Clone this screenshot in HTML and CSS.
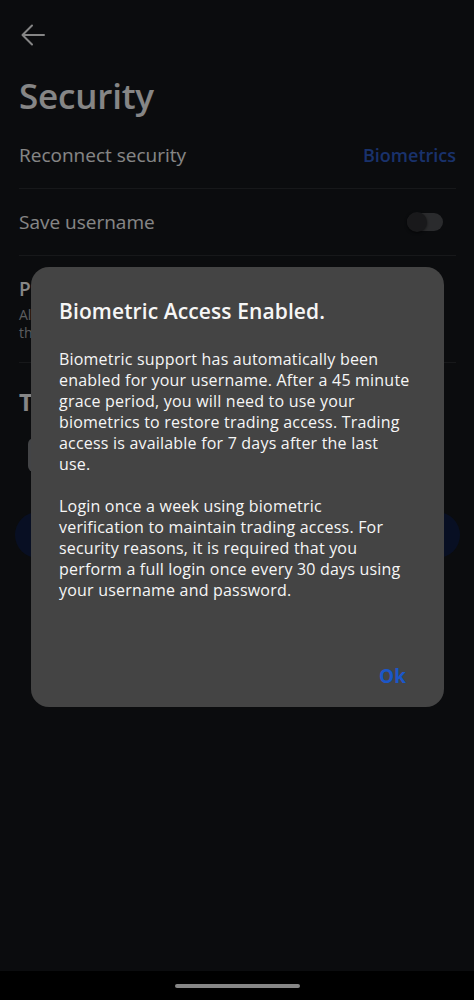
FILE: index.html
```html
<!DOCTYPE html>
<html>
<head>
    <title>Security</title>
    <link rel="stylesheet" href="styles.css">
</head>
<body>
    <div class="schermo">
        <div class="pagina">
            <div class="barra-top">
                <svg class="freccia" width="28" height="28" viewBox="0 0 28 28">
                    <path d="M25 14H4M13 4.5L3.5 14 13 23.5" fill="none" stroke="#f2f2f2" stroke-width="2" stroke-linecap="round" stroke-linejoin="round"/>
                </svg>
            </div>
            <h1 class="titolo">Security</h1>
            <div class="riga">
                <span>Reconnect security</span>
                <span class="link">Biometrics</span>
            </div>
            <div class="riga">
                <span>Save username</span>
                <span class="interruttore"><span class="pallino"></span></span>
            </div>
            <div class="riga riga-alta">
                <div>
                    <div class="voce">Price alerts</div>
                    <div class="nota">Allow alerts when prices reach your targets<br>through push notifications.</div>
                </div>
            </div>
            <h2 class="sezione">Trading</h2>
            <div class="scheda">Unlock trading</div>
            <div class="bottone">Continue</div>
        </div>
        <div class="velo"></div>
        <div class="dialogo">
            <h3>Biometric Access Enabled.</h3>
            <p>Biometric support has automatically been enabled for your username. After a 45 minute grace period, you will need to use your biometrics to restore trading access. Trading access is available for 7 days after the last<br>use.</p>
            <p>Login once a week using biometric<br>verification to maintain trading access. For security reasons, it is required that you<br>perform a full login once every 30 days using your username and password.</p>
            <div class="azioni">
                <span class="ok">Ok</span>
            </div>
        </div>
        <div class="nav">
            <span class="home"></span>
        </div>
    </div>
</body>
</html>
```

FILE: styles.css
```css
* {
    box-sizing: border-box;
}
body {
    margin: 0;
    background-color: #000;
    font-family: "Open Sans", "Liberation Sans", sans-serif;
}
.schermo {
    position: relative;
    width: 474px;
    height: 1000px;
    overflow: hidden;
    display: flex;
    flex-direction: column;
}
.pagina {
    flex: 1;
    background-color: #14161a;
    color: #f4f4f4;
    padding: 0 18px 0 19px;
}
.barra-top {
    height: 70px;
    display: flex;
    align-items: center;
}
.freccia {
    display: block;
}
.titolo {
    margin: 4px 0 4px;
    font-size: 35px;
    font-weight: 600;
    letter-spacing: -0.2px;
    line-height: 44px;
}
.riga {
    display: flex;
    justify-content: space-between;
    align-items: center;
    height: 67px;
    font-size: 19px;
    border-bottom: 1px solid #2a2c31;
}
.riga-alta {
    height: 107px;
    align-items: flex-start;
    padding-top: 20px;
}
.voce {
    font-size: 19px;
    font-weight: 600;
}
.nota {
    font-size: 14px;
    color: #a7a9ad;
    line-height: 18px;
    margin-top: 4px;
}
.link {
    color: #2f5bc4;
    font-weight: 600;
    font-size: 18px;
}
.interruttore {
    width: 36px;
    height: 18px;
    border-radius: 9px;
    background-color: #4e4f52;
    display: flex;
    align-items: center;
    margin-right: 13px;
}
.pallino {
    width: 20px;
    height: 20px;
    border-radius: 50%;
    background-color: #2e2f32;
    box-shadow: 0 1px 3px rgba(0, 0, 0, 0.6);
}
.sezione {
    margin: 22px 0 0;
    font-size: 24px;
    font-weight: 700;
}
.scheda {
    margin: 20px 0 0 9px;
    height: 34px;
    border-left: 3px solid #7a7c80;
    border-radius: 6px 0 0 6px;
    padding-left: 14px;
    line-height: 34px;
    font-size: 18px;
}
.bottone {
    margin: 40px -4px 0 -4px;
    height: 46px;
    border-radius: 23px;
    background-color: #101d40;
    text-align: center;
    line-height: 46px;
    font-weight: 600;
}
.velo {
    position: absolute;
    inset: 0;
    background-color: rgba(0, 0, 0, 0.45);
}
.dialogo {
    position: absolute;
    top: 267px;
    left: 31px;
    width: 413px;
    height: 440px;
    background-color: #444444;
    border-radius: 18px;
    padding: 30px 28px 0 28px;
    color: #f6f6f6;
    display: flex;
    flex-direction: column;
}
.dialogo h3 {
    margin: 0 0 24px;
    font-size: 21px;
    font-weight: 600;
    line-height: 28px;
    letter-spacing: 0.1px;
}
.dialogo p {
    margin: 0 0 21px;
    font-size: 16px;
    line-height: 21px;
    letter-spacing: 0.2px;
}
.azioni {
    margin-top: auto;
    display: flex;
    justify-content: flex-end;
    padding: 0 10px 18px 0;
}
.ok {
    color: #1b57c9;
    font-weight: 700;
    font-size: 19px;
}
.nav {
    height: 29px;
    background-color: #000;
    display: flex;
    justify-content: center;
    align-items: center;
}
.home {
    width: 125px;
    height: 4px;
    border-radius: 2px;
    background-color: #f4f4f4;
}
```
